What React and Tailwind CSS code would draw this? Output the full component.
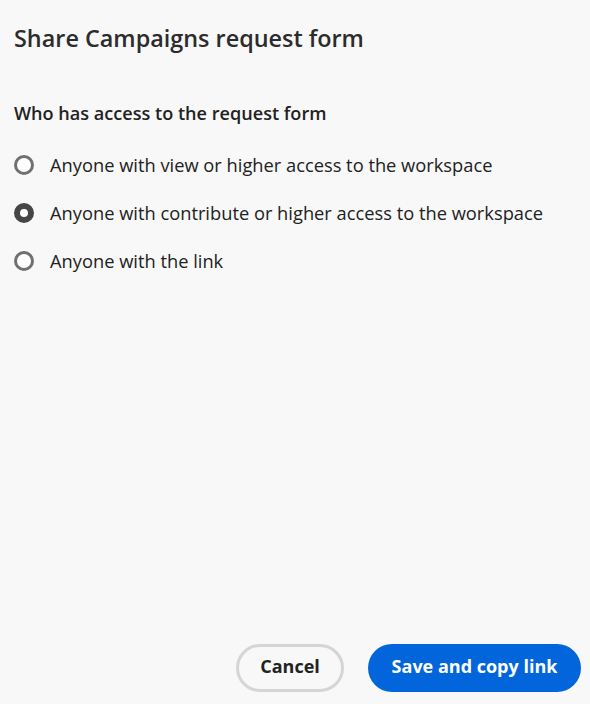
const options = [
  { label: "Anyone with view or higher access to the workspace", checked: false },
  { label: "Anyone with contribute or higher access to the workspace", checked: true },
  { label: "Anyone with the link", checked: false },
];

const Radio = ({ checked }) => (
  <span
    className={
      checked
        ? "w-[20px] h-[20px] rounded-full border-[6px] border-[#464646] bg-white shrink-0"
        : "w-[20px] h-[20px] rounded-full border-[3px] border-[#707070] bg-white shrink-0"
    }
  />
);

export default function App() {
  return (
    <div
      className="w-[590px] h-[704px] bg-[#f8f8f8] flex flex-col text-[#222222]"
      style={{ fontFamily: "'Open Sans', 'Noto Sans', sans-serif" }}
    >
      <h1 className="pl-[14px] pt-[23px] text-[23.4px] leading-[30px] font-semibold text-[#2c2c2c]">
        Share Campaigns request form
      </h1>

      <h2 className="pl-[14px] mt-[48px] text-[18.1px] leading-[24px] font-semibold">
        Who has access to the request form
      </h2>

      <div className="mt-[16px] flex flex-col">
        {options.map((o, i) => (
          <label key={i} className="flex items-center gap-[16px] pl-[14px] h-[48px]">
            <Radio checked={o.checked} />
            <span className="text-[18.3px] leading-[24px]">{o.label}</span>
          </label>
        ))}
      </div>

      <div className="mt-auto flex justify-end gap-[24px] pr-[9px] pb-[12px]">
        <button className="h-[48px] w-[108px] pb-[3px] rounded-full border-[3px] border-[#d5d5d5] text-[18px] font-bold text-[#222222]">
          Cancel
        </button>
        <button className="h-[48px] w-[213px] pb-[3px] rounded-full bg-[#0265dc] text-[18px] font-bold text-white">
          Save and copy link
        </button>
      </div>
    </div>
  );
}
